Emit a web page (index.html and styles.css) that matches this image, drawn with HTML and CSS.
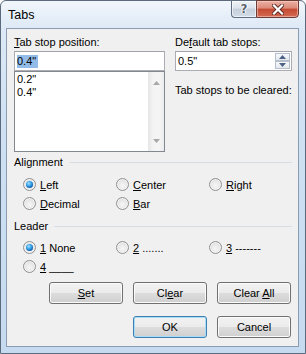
FILE: index.html
```html
<!DOCTYPE html>
<html>
<head>
<meta charset="utf-8">
<title>Tabs</title>
<link rel="stylesheet" href="styles.css">
</head>
<body>
<div class="window">
  <div class="titlebar">
    <span class="title">Tabs</span>
    <div class="caption-buttons">
      <div class="cap-btn help"><span class="q">?</span></div>
      <div class="cap-btn close">
        <svg width="12" height="11" viewBox="0 0 12 11">
          <path d="M2 1.5 L10 9.5 M10 1.5 L2 9.5" stroke="#5a2a25" stroke-width="4" stroke-linecap="square" fill="none"/>
          <path d="M2 1.5 L10 9.5 M10 1.5 L2 9.5" stroke="#ffffff" stroke-width="2.2" stroke-linecap="square" fill="none"/>
        </svg>
      </div>
    </div>
  </div>
  <div class="client">
    <div class="top">
      <div class="col-left">
        <div class="label"><u>T</u>ab stop position:</div>
        <div class="textbox"><span class="sel">0.4"</span></div>
        <div class="listbox">
          <div class="items">
            <div class="item">0.2"</div>
            <div class="item">0.4"</div>
          </div>
          <div class="vscroll">
            <svg class="arrow" width="7" height="4" viewBox="0 0 7 4"><path d="M0 4 L3.5 0 L7 4 Z" fill="#a8a8a8"/></svg>
            <svg class="arrow" width="7" height="4" viewBox="0 0 7 4"><path d="M0 0 L3.5 4 L7 0 Z" fill="#a8a8a8"/></svg>
          </div>
        </div>
      </div>
      <div class="col-right">
        <div class="label">De<u>f</u>ault tab stops:</div>
        <div class="spinbox">
          <span class="val">0.5"</span>
          <div class="spin">
            <div class="spin-btn"><svg width="7" height="4" viewBox="0 0 7 4"><path d="M0 4 L3.5 0 L7 4 Z" fill="#4d6185"/></svg></div>
            <div class="spin-btn"><svg width="7" height="4" viewBox="0 0 7 4"><path d="M0 0 L3.5 4 L7 0 Z" fill="#4d6185"/></svg></div>
          </div>
        </div>
        <div class="label clear-label">Tab stops to be cleared:</div>
      </div>
    </div>

    <div class="group-head head-align"><span>Alignment</span><div class="rule"></div></div>
    <div class="radios radios-align">
      <div class="radio"><span class="dot checked"></span><span><u>L</u>eft</span></div>
      <div class="radio"><span class="dot"></span><span><u>C</u>enter</span></div>
      <div class="radio"><span class="dot"></span><span><u>R</u>ight</span></div>
      <div class="radio"><span class="dot"></span><span><u>D</u>ecimal</span></div>
      <div class="radio"><span class="dot"></span><span><u>B</u>ar</span></div>
    </div>

    <div class="group-head head-leader"><span>Leader</span><div class="rule"></div></div>
    <div class="radios radios-leader">
      <div class="radio"><span class="dot checked"></span><span><u>1</u> None</span></div>
      <div class="radio"><span class="dot"></span><span><u>2</u> .......</span></div>
      <div class="radio"><span class="dot"></span><span><u>3</u> -------</span></div>
      <div class="radio"><span class="dot"></span><span><u>4</u> ____</span></div>
    </div>

    <div class="btn-row row-1">
      <div class="btn"><span><u>S</u>et</span></div>
      <div class="btn"><span>Cl<u>e</u>ar</span></div>
      <div class="btn"><span>Clear <u>A</u>ll</span></div>
    </div>
    <div class="btn-row row-2">
      <div class="btn default"><span>OK</span></div>
      <div class="btn"><span>Cancel</span></div>
    </div>
  </div>
</div>
</body>
</html>
```

FILE: styles.css
```css
* { box-sizing: border-box; }
html, body { margin: 0; padding: 0; }
body {
  width: 306px;
  height: 354px;
  overflow: hidden;
  background: #ffffff;
  font-family: "Liberation Sans", Arial, sans-serif;
  font-size: 11px;
  color: #000;
}
u { text-decoration: underline; text-underline-offset: 1px; }

.window {
  width: 306px;
  height: 354px;
  display: flex;
  flex-direction: column;
  border: 1px solid #5b6a7c;
  border-radius: 6px 6px 0 0;
  background: linear-gradient(to bottom, #f1f6fb 0px, #dde9f6 28px, #cfe1f3 120px, #c6dbf0 354px);
}

.titlebar {
  height: 27px;
  flex: none;
  display: flex;
  align-items: flex-start;
  justify-content: space-between;
}
.title {
  font-size: 12.5px;
  line-height: 12px;
  margin: 8px 0 0 7px;
  color: #000;
}
.caption-buttons {
  display: flex;
  margin: -1px 6px 0 0;
}
.cap-btn {
  height: 18px;
  display: flex;
  align-items: center;
  justify-content: center;
  border: 1px solid #5f6e82;
}
.help {
  width: 25px;
  border-right: none;
  border-radius: 0 0 0 4px;
  background: linear-gradient(to bottom, #eef3f8 0%, #dbe3ec 45%, #c5cfdb 50%, #d3dce6 100%);
  box-shadow: inset 0 0 0 1px rgba(255,255,255,0.6);
}
.help .q {
  font-family: "DejaVu Sans", sans-serif;
  font-weight: bold;
  font-size: 12px;
  line-height: 12px;
  color: #5d6670;
  text-shadow: 0 0 1px #fff, 0 0 1px #fff, 1px 0 0 #fff, -1px 0 0 #fff;
}
.close {
  width: 43px;
  border-radius: 0 0 4px 0;
  border-color: #6b3b36;
  background: linear-gradient(to bottom, #eab0a4 0%, #dd8a78 45%, #c44a32 50%, #d46a52 100%);
  box-shadow: inset 0 0 0 1px rgba(255,220,210,0.5);
}
.close svg { display: block; }

.client {
  flex: 1;
  margin: 0 6px 6px 5px;
  border: 1px solid #8b9db2;
  background: #f0f0f0;
  padding: 7px 6px 0 7px;
  display: flex;
  flex-direction: column;
}

.top {
  display: flex;
  gap: 10px;
}
.col-left { width: 151px; display: flex; flex-direction: column; }
.col-right { width: 117px; display: flex; flex-direction: column; }

.label {
  line-height: 13px;
  height: 13px;
  margin-bottom: 2px;
  white-space: nowrap;
}
.clear-label { margin-top: 13px; }

.textbox {
  height: 20px;
  border: 1px solid #abadb3;
  border-top-color: #a0a2aa;
  background: #fff;
  display: flex;
  align-items: center;
  padding-left: 2px;
}
.sel {
  background: #93bbe8;
  height: 13px;
  line-height: 13px;
  padding-right: 2px;
}

.listbox {
  height: 81px;
  border: 1px solid #828790;
  background: #fff;
  display: flex;
}
.items {
  flex: 1;
  padding: 1px 0 0 2px;
}
.item { line-height: 13px; height: 13px; }
.vscroll {
  width: 16px;
  background: linear-gradient(to right, #e6e6e6 0%, #f3f3f3 30%, #f5f5f5 70%, #ececec 100%);
  display: flex;
  flex-direction: column;
  align-items: center;
  justify-content: space-between;
  padding: 9px 0 8px 0;
}
.arrow { display: block; }

.spinbox {
  height: 20px;
  border: 1px solid #abadb3;
  border-top-color: #a0a2aa;
  background: #fff;
  display: flex;
  align-items: center;
  padding-left: 2px;
  padding-right: 1px;
}
.val { flex: 1; line-height: 13px; }
.spin {
  width: 15px;
  height: 16px;
  display: flex;
  flex-direction: column;
}
.spin-btn {
  height: 8px;
  border: 1px solid #b5bfcc;
  background: linear-gradient(to bottom, #f7f9fb, #e3e8ee);
  display: flex;
  align-items: center;
  justify-content: center;
}
.spin-btn svg { display: block; }

.group-head {
  display: flex;
  align-items: center;
  gap: 6px;
  line-height: 13px;
  height: 13px;
  width: 278px;
}
.group-head .rule {
  flex: 1;
  height: 1px;
  background: #d5dfe5;
}
.head-align { margin-top: 4px; }
.head-leader { margin-top: 7px; }

.radios {
  display: grid;
  grid-template-columns: 93px 93px 93px;
  grid-auto-rows: 19px;
  margin-left: 9px;
}
.radios-align { margin-top: 6px; }
.radios-leader { margin-top: 5px; }

.radio {
  display: flex;
  align-items: center;
  gap: 4px;
  white-space: nowrap;
}
.dot {
  width: 13px;
  height: 13px;
  flex: none;
  border-radius: 50%;
  border: 1px solid #919191;
  background: radial-gradient(circle at 50% 60%, #f6f6f6 0%, #e9e9e9 45%, #d2d2d2 100%);
  box-shadow: inset 0 0 0 1px #f4f4f4;
  display: flex;
  align-items: center;
  justify-content: center;
}
.dot.checked::after {
  content: "";
  width: 7px;
  height: 7px;
  border-radius: 50%;
  background: radial-gradient(circle at 40% 35%, #a6e0ff 0%, #36a2e8 40%, #0d5aa8 75%, #173e6e 100%);
}

.btn-row {
  display: flex;
  justify-content: flex-end;
  gap: 10px;
  margin-right: 1px;
}
.row-1 { margin-top: 6px; }
.row-2 { margin-top: 12px; }
.btn {
  width: 74px;
  height: 22px;
  border: 1px solid #707070;
  border-radius: 3px;
  background: linear-gradient(to bottom, #f2f2f2 0%, #ebebeb 50%, #dddddd 50%, #cfcfcf 100%);
  box-shadow: inset 0 0 0 1px #fbfbfb;
  display: flex;
  align-items: center;
  justify-content: center;
  line-height: 13px;
  white-space: nowrap;
}
.btn.default {
  border-color: #3c7fb1;
  box-shadow: inset 0 0 0 1px #a9dcf6;
}
```
